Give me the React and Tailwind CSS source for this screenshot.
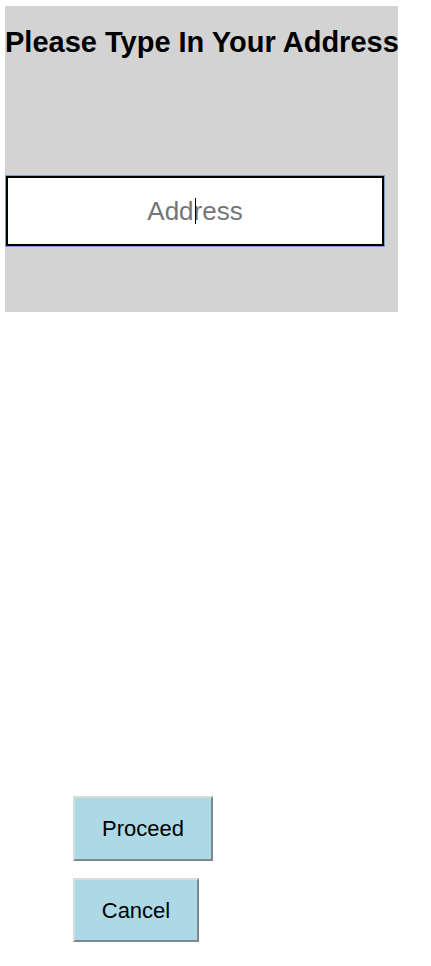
import React, { useState } from 'react';

const font = { fontFamily: '"Liberation Sans", Arial, sans-serif' };

const AddressPage = () => {
  const [address, setAddress] = useState('');

  return (
    <div className="min-h-[966px] bg-white pt-[6px] pl-[5px]" style={font}>
      <div className="w-[393px] h-[306px] bg-[#d3d3d3] pt-[20px]">
        <h1 className="text-[29px] font-bold leading-[32px] text-black whitespace-nowrap">
          Please Type In Your Address
        </h1>
        <div className="relative mt-[118px] ml-[1px] w-[378px]">
          <input
            type="text"
            value={address}
            onChange={(e) => setAddress(e.target.value)}
            placeholder="Address"
            className="w-[378px] h-[70px] bg-white border-2 border-black shadow-[0_0_0_1px_#7d9bd1] text-center text-[26px] text-black placeholder:text-[#757575] outline-none"
          />
          {address === '' && (
            <span className="pointer-events-none absolute left-[189px] top-[22px] w-px h-[26px] bg-black" />
          )}
        </div>
      </div>

      <div className="mt-[484px] ml-[68px] flex flex-col items-start gap-[17px]">
        <button className="w-[140px] h-[65px] bg-[#add8e6] text-[22px] text-black border-2 border-t-[#d9dcdd] border-l-[#d9dcdd] border-b-[#7c8a8f] border-r-[#7c8a8f]">
          Proceed
        </button>
        <button className="w-[126px] h-[64px] bg-[#add8e6] text-[22px] text-black border-2 border-t-[#d9dcdd] border-l-[#d9dcdd] border-b-[#7c8a8f] border-r-[#7c8a8f]">
          Cancel
        </button>
      </div>
    </div>
  );
};

export default function App() {
  return <AddressPage />;
}
